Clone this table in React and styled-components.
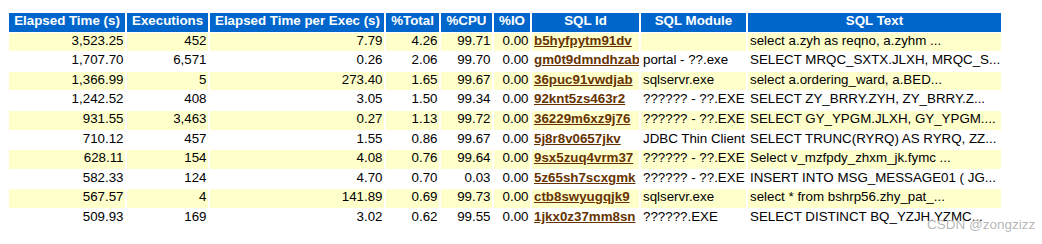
import React from 'react'
import styled, { createGlobalStyle } from 'styled-components'

const GlobalStyle = createGlobalStyle`
  html, body {
    margin: 0;
    padding: 0;
    background: #ffffff;
  }
  body {
    font-family: Arial, "Liberation Sans", Helvetica, sans-serif;
  }
`

const columns = [
  { title: 'Elapsed Time (s)', width: 116, align: 'right' },
  { title: 'Executions', width: 81, align: 'right' },
  { title: 'Elapsed Time per Exec (s)', width: 174, align: 'right' },
  { title: '%Total', width: 53, align: 'right' },
  { title: '%CPU', width: 51, align: 'right' },
  { title: '%IO', width: 36, align: 'right' },
  { title: 'SQL Id', width: 107, align: 'left' },
  { title: 'SQL Module', width: 105, align: 'left' },
  { title: 'SQL Text', width: 253, align: 'left' },
]

const rows = [
  ['3,523.25', '452', '7.79', '4.26', '99.71', '0.00', 'b5hyfpytm91dv', '', 'select a.zyh as reqno, a.zyhm ...'],
  ['1,707.70', '6,571', '0.26', '2.06', '99.70', '0.00', 'gm0t9dmndhzab', 'portal - ??.exe', 'SELECT MRQC_SXTX.JLXH, MRQC_S...'],
  ['1,366.99', '5', '273.40', '1.65', '99.67', '0.00', '36puc91vwdjab', 'sqlservr.exe', 'select a.ordering_ward, a.BED...'],
  ['1,242.52', '408', '3.05', '1.50', '99.34', '0.00', '92knt5zs463r2', '?????? - ??.EXE', 'SELECT ZY_BRRY.ZYH, ZY_BRRY.Z...'],
  ['931.55', '3,463', '0.27', '1.13', '99.72', '0.00', '36229m6xz9j76', '?????? - ??.EXE', 'SELECT GY_YPGM.JLXH, GY_YPGM....'],
  ['710.12', '457', '1.55', '0.86', '99.67', '0.00', '5j8r8v0657jkv', 'JDBC Thin Client', 'SELECT TRUNC(RYRQ) AS RYRQ, ZZ...'],
  ['628.11', '154', '4.08', '0.76', '99.64', '0.00', '9sx5zuq4vrm37', '?????? - ??.EXE', 'Select v_mzfpdy_zhxm_jk.fymc ...'],
  ['582.33', '124', '4.70', '0.70', '0.03', '0.00', '5z65sh7scxgmk', '?????? - ??.EXE', 'INSERT INTO MSG_MESSAGE01 ( JG...'],
  ['567.57', '4', '141.89', '0.69', '99.73', '0.00', 'ctb8swyugqjk9', 'sqlservr.exe', 'select * from bshrp56.zhy_pat_...'],
  ['509.93', '169', '3.02', '0.62', '99.55', '0.00', '1jkx0z37mm8sn', '??????.EXE', 'SELECT DISTINCT BQ_YZJH.YZMC...'],
]

export default function App() {
  return (
    <Page>
      <GlobalStyle />
      <Table>
        <colgroup>
          {columns.map((c) => (
            <col key={c.title} style={{ width: c.width }} />
          ))}
        </colgroup>
        <thead>
          <tr>
            {columns.map((c) => (
              <HeadCell key={c.title}>{c.title}</HeadCell>
            ))}
          </tr>
        </thead>
        <tbody>
          {rows.map((row, i) => (
            <tr key={row[6]}>
              {row.map((value, j) => (
                <Cell key={j} $shaded={i % 2 === 0} $align={columns[j].align}>
                  {j === 6 ? <SqlLink href="#">{value}</SqlLink> : value}
                </Cell>
              ))}
            </tr>
          ))}
        </tbody>
      </Table>
      <Watermark>CSDN @zongzizz</Watermark>
    </Page>
  )
}

const Page = styled.div`
  position: relative;
  width: 1042px;
  height: 244px;
  padding: 12px 0 0 7px;
  box-sizing: border-box;
`

const Table = styled.table`
  border-collapse: separate;
  border-spacing: 2px 1px;
  table-layout: fixed;
  width: 996px;
  font-family: Arial, "Liberation Sans", Helvetica, sans-serif;
  font-size: 13.33px;
`

const HeadCell = styled.th`
  background: #0066cc;
  color: #ffffff;
  font-weight: bold;
  line-height: 16px;
  padding: 0 5px 2.7px;
  text-align: center;
  white-space: nowrap;
  overflow: hidden;
`

const Cell = styled.td`
  background: ${(p) => (p.$shaded ? '#ffffcc' : '#ffffff')};
  color: #000000;
  text-align: ${(p) => p.$align};
  vertical-align: top;
  line-height: 16px;
  padding: 0 1.5px 2.6px 2px;
  white-space: nowrap;
  overflow: hidden;
`

const SqlLink = styled.a`
  color: #663300;
  font-weight: bold;
  text-decoration: underline;
`

const Watermark = styled.div`
  position: absolute;
  left: 927px;
  top: 217px;
  font-family: Arial, "Liberation Sans", sans-serif;
  font-size: 13.5px;
  color: rgba(150, 150, 150, 0.7);
  text-shadow: 0 0 1px rgba(255, 255, 255, 0.9);
  white-space: nowrap;
`
